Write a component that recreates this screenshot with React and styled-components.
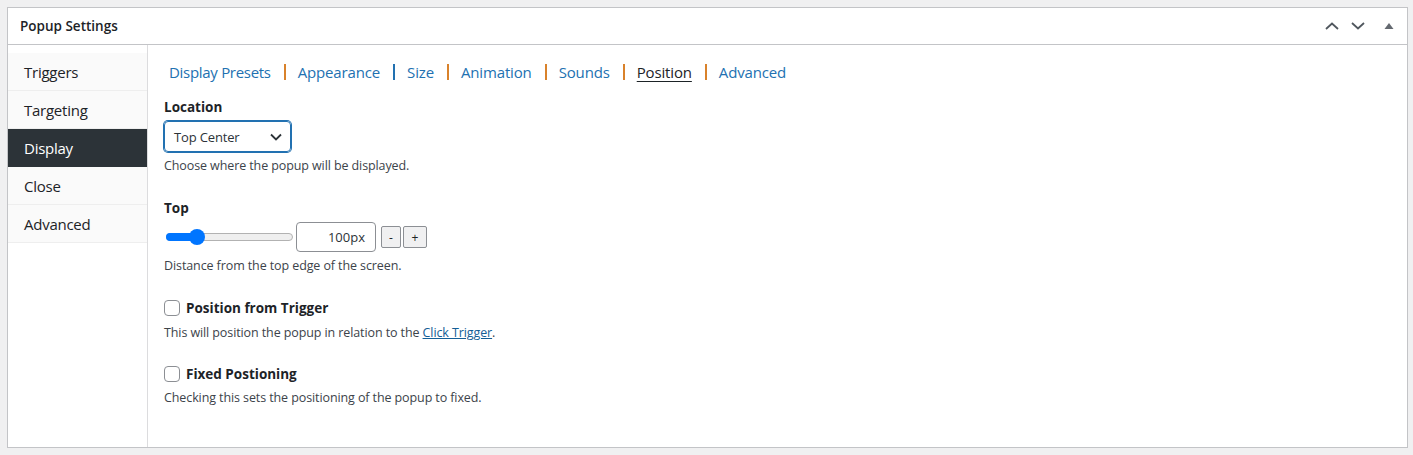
import React from "react";
import styled, { createGlobalStyle } from "styled-components";

const Global = createGlobalStyle`
  html, body { margin: 0; padding: 0; background: #f0f0f1; }
  body { font-family: "Open Sans", "Noto Sans", sans-serif; color: #1d2327; }
  * { box-sizing: border-box; }
`;

const Page = styled.div`
  padding: 7px 5px 8px 7px;
`;

const Box = styled.div`
  background: #fff;
  border: 1px solid #c3c4c7;
  height: 441px;
  display: flex;
  flex-direction: column;
`;

const Header = styled.div`
  height: 37px;
  border-bottom: 1px solid #c3c4c7;
  display: flex;
  align-items: center;
  padding: 0 0 0 12px;
`;

const Title = styled.h2`
  margin: 0;
  flex: 1;
  font-size: 13.5px;
  font-weight: 600;
  color: #1d2327;
`;

const HeaderActions = styled.div`
  display: flex;
  align-items: center;
`;

const IconBtn = styled.span`
  width: ${(p) => p.$w || 26}px;
  height: 36px;
  display: flex;
  align-items: center;
  justify-content: center;
`;

const Body = styled.div`
  flex: 1;
  display: flex;
`;

const Sidebar = styled.ul`
  list-style: none;
  margin: 0;
  padding: 8px 0 0;
  width: 140px;
  border-right: 1px solid #dcdcde;
`;

const TabItem = styled.li`
  height: 38px;
  display: flex;
  align-items: center;
  padding-left: 16px;
  font-size: 15px;
  letter-spacing: -0.25px;
  background: ${(p) => (p.$active ? "#2c3338" : "#fafafa")};
  color: ${(p) => (p.$active ? "#fff" : "#1d2327")};
  border-bottom: 1px solid ${(p) => (p.$active ? "#2c3338" : "#eee")};
`;

const Content = styled.div`
  flex: 1;
  padding: 17px 16px 0 16px;
`;

const SubTabs = styled.div`
  display: flex;
  align-items: center;
  font-size: 15px;
  letter-spacing: -0.15px;
  height: 19px;
  margin-bottom: 17px;
  padding-left: 5px;
`;

const SubTab = styled.a`
  color: ${(p) => (p.$active ? "#1d2327" : "#2271b1")};
  text-decoration: ${(p) => (p.$active ? "underline" : "none")};
  text-underline-offset: 3px;
  text-decoration-thickness: 1px;
  letter-spacing: ${(p) => p.$ls || "inherit"};
`;

const Sep = styled.span`
  display: inline-block;
  width: 2px;
  height: 16px;
  margin: 0 12px 0 13px;
  background: ${(p) => (p.$blue ? "#2271b1" : "#d9822b")};
`;

const Field = styled.div`
  margin-bottom: ${(p) => p.$mb || 26}px;
`;

const Label = styled.div`
  font-size: 13.5px;
  font-weight: 700;
  line-height: 18px;
  margin-bottom: 5px;
  color: #1d2327;
`;

const Desc = styled.p`
  margin: ${(p) => p.$mt || 5}px 0 0;
  font-size: 12.5px;
  line-height: 18px;
  color: #3c434a;
  letter-spacing: -0.1px;
  a { color: #135e96; text-decoration: underline; }
`;

const Select = styled.div`
  width: 127px;
  height: 31px;
  border: 1px solid #2271b1;
  box-shadow: 0 0 0 1px #2271b1;
  border-radius: 4px;
  display: flex;
  align-items: center;
  justify-content: space-between;
  padding: 0 8px 0 9px;
  font-size: 13px;
  letter-spacing: -0.15px;
  color: #2c3338;
`;

const RangeRow = styled.div`
  display: flex;
  align-items: center;
`;

const Track = styled.div`
  position: relative;
  width: 127px;
  height: 8px;
  margin: 0 3px 0 2px;
  border-radius: 4px;
  background: #efefef;
  border: 1px solid #b2b2b2;
`;

const Fill = styled.div`
  position: absolute;
  left: -1px;
  top: -1px;
  bottom: -1px;
  border-radius: 4px;
  background: #0075ff;
`;

const Thumb = styled.div`
  position: absolute;
  top: 50%;
  width: 16px;
  height: 16px;
  margin: -8px 0 0 -8px;
  border-radius: 50%;
  background: #0075ff;
`;

const NumInput = styled.div`
  width: 80px;
  height: 30px;
  border: 1px solid #8c8f94;
  border-radius: 4px;
  display: flex;
  align-items: center;
  justify-content: flex-end;
  padding-right: 10px;
  font-size: 13px;
  color: #2c3338;
`;

const StepBtn = styled.button`
  height: 22px;
  width: ${(p) => p.$w}px;
  margin-left: ${(p) => p.$ml}px;
  padding: 0;
  border: 1px solid #8c8f94;
  border-radius: 2px;
  background: #f0f0f1;
  font-family: inherit;
  font-size: 12px;
  color: #1d2327;
`;

const CheckRow = styled.label`
  display: flex;
  align-items: center;
  gap: 6px;
  font-size: 13.5px;
  font-weight: 700;
  color: #1d2327;
`;

const Check = styled.span`
  width: 16px;
  height: 16px;
  border: 1px solid #8c8f94;
  border-radius: 4px;
  background: #fff;
`;

const Chevron = ({ up }) => (
  <svg width="14" height="8" viewBox="0 0 14 8" fill="none">
    <path
      d={up ? "M1 7 L7 1.5 L13 7" : "M1 1 L7 6.5 L13 1"}
      stroke="#50575e"
      strokeWidth="1.8"
    />
  </svg>
);

export default function App() {
  const tabs = ["Triggers", "Targeting", "Display", "Close", "Advanced"];
  const subs = ["Display Presets", "Appearance", "Size", "Animation", "Sounds", "Position", "Advanced"];
  return (
    <Page>
      <Global />
      <Box>
        <Header>
          <Title>Popup Settings</Title>
          <HeaderActions>
            <IconBtn><Chevron up /></IconBtn>
            <IconBtn><Chevron /></IconBtn>
            <IconBtn $w={36}>
              <svg width="10" height="6" viewBox="0 0 10 6"><path d="M5 0 L9.5 6 L0.5 6 Z" fill="#646970" /></svg>
            </IconBtn>
          </HeaderActions>
        </Header>
        <Body>
          <Sidebar>
            {tabs.map((t) => (
              <TabItem key={t} $active={t === "Display"}>{t}</TabItem>
            ))}
          </Sidebar>
          <Content>
            <SubTabs>
              {subs.map((s, i) => (
                <React.Fragment key={s}>
                  {i > 0 && <Sep $blue={i === 2} />}
                  <SubTab $active={s === "Position"} $ls={i === 0 ? "-0.3px" : undefined}>{s}</SubTab>
                </React.Fragment>
              ))}
            </SubTabs>
            <Field $mb={24}>
              <Label>Location</Label>
              <Select>
                <span>Top Center</span>
                <svg width="12" height="8" viewBox="0 0 12 8" fill="none">
                  <path d="M1 1.5 L6 6.5 L11 1.5" stroke="#2c3338" strokeWidth="1.8" />
                </svg>
              </Select>
              <Desc>Choose where the popup will be displayed.</Desc>
            </Field>
            <Field $mb={24}>
              <Label>Top</Label>
              <RangeRow>
                <Track>
                  <Fill style={{ width: "25%" }} />
                  <Thumb style={{ left: "24%" }} />
                </Track>
                <NumInput>100px</NumInput>
                <StepBtn $w={20} $ml={5}>-</StepBtn>
                <StepBtn $w={24} $ml={2}>+</StepBtn>
              </RangeRow>
              <Desc>Distance from the top edge of the screen.</Desc>
            </Field>
            <Field $mb={23}>
              <CheckRow><Check />Position from Trigger</CheckRow>
              <Desc $mt={7}>This will position the popup in relation to the <a>Click Trigger</a>.</Desc>
            </Field>
            <Field>
              <CheckRow><Check />Fixed Postioning</CheckRow>
              <Desc $mt={6}>Checking this sets the positioning of the popup to fixed.</Desc>
            </Field>
          </Content>
        </Body>
      </Box>
    </Page>
  );
}
